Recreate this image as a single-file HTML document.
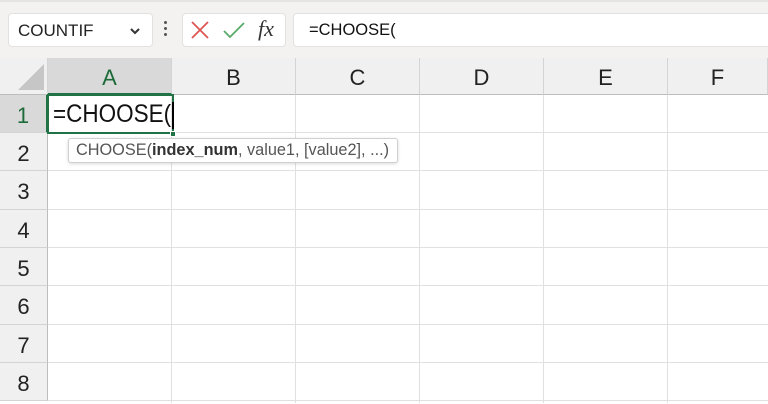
<!DOCTYPE html>
<html><head><style>
*{margin:0;padding:0;box-sizing:border-box}
body{width:768px;height:403px;overflow:hidden;background:#fff;font-family:"Liberation Sans",sans-serif;position:relative}
.tb{position:absolute;left:0;top:0;width:768px;height:58px;background:#f3f2f1;border-top:2px solid #e6e4e2}
.box{position:absolute;top:13px;height:34px;background:#fff;border:1px solid #e3e1df;border-radius:4px}
.a{position:absolute}
.ch{position:absolute;top:58px;height:37px;background:#f0f0f0;border-right:1px solid #d4d4d4;border-bottom:1px solid #bdbdbd;font-size:22px;color:#222;text-align:center;line-height:39px}
.rh{position:absolute;left:0;width:48px;height:38px;background:#f0f0f0;border-bottom:1px solid #d4d4d4;border-right:1px solid #bdbdbd;font-size:22px;color:#222;text-align:center;line-height:41px}
.vl{position:absolute;top:95px;height:308px;width:1px;background:#e0e0e0}
.hl{position:absolute;left:48px;width:720px;height:1px;background:#e0e0e0}
</style></head><body>
<div class="tb"></div>
<div class="box" style="left:8px;width:145px"></div>
<div class="a" style="left:18px;top:21px;font-size:17px;color:#222">COUNTIF</div>
<svg class="a" style="left:129px;top:26px" width="12" height="10"><path d="M2 3 L6 7 L10 3" stroke="#333" stroke-width="2" fill="none"/></svg>
<div class="a" style="left:164px;top:21px;width:3px;height:3px;background:#555;border-radius:2px;box-shadow:0 6px 0 #555,0 12px 0 #555"></div>
<div class="box" style="left:182px;width:104px"></div>
<svg class="a" style="left:189px;top:20px" width="22" height="20"><path d="M3 2 L19 18 M19 2 L3 18" stroke="#e05555" stroke-width="1.8" fill="none"/></svg>
<svg class="a" style="left:222px;top:20px" width="24" height="20"><path d="M2 11 L8 17 L22 3" stroke="#5aaa6a" stroke-width="1.8" fill="none"/></svg>
<div class="a" style="left:258px;top:16px;font-family:'Liberation Serif',serif;font-style:italic;font-size:22px;color:#333">fx</div>
<div class="box" style="left:293px;width:480px;border-right:none"></div>
<div class="a" style="left:309px;top:21px;font-size:16.5px;color:#111">=CHOOSE(</div>

<div class="ch" style="left:0;width:48px;background:#f0f0f0"></div>
<svg class="a" style="left:18px;top:64px" width="26" height="26"><path d="M26 0 L26 26 L0 26 Z" fill="#c6c6c6"/></svg>
<div class="ch" style="left:48px;width:124px;background:#d9d9d9;color:#1e6b3a;border-bottom:2px solid #217346">A</div>
<div class="ch" style="left:172px;width:124px">B</div>
<div class="ch" style="left:296px;width:124px">C</div>
<div class="ch" style="left:420px;width:124px">D</div>
<div class="ch" style="left:544px;width:124px">E</div>
<div class="ch" style="left:668px;width:100px">F</div>

<div class="rh" style="top:95px;background:#d9d9d9;color:#1e6b3a;border-right:2px solid #217346">1</div>
<div class="rh" style="top:133px">2</div>
<div class="rh" style="top:171px;height:39px">3</div>
<div class="rh" style="top:210px">4</div>
<div class="rh" style="top:248px">5</div>
<div class="rh" style="top:286px;height:39px">6</div>
<div class="rh" style="top:325px">7</div>
<div class="rh" style="top:363px">8</div>

<div class="vl" style="left:171px"></div><div class="vl" style="left:295px"></div><div class="vl" style="left:419px"></div><div class="vl" style="left:543px"></div><div class="vl" style="left:667px"></div>
<div class="hl" style="top:132px"></div><div class="hl" style="top:170px"></div><div class="hl" style="top:209px"></div><div class="hl" style="top:247px"></div><div class="hl" style="top:285px"></div><div class="hl" style="top:324px"></div><div class="hl" style="top:362px"></div><div class="hl" style="top:400px"></div>

<div class="a" style="left:47px;top:94px;width:127px;height:40px;border:2px solid #217346"></div>
<div class="a" style="left:170px;top:131px;width:6px;height:6px;background:#217346;border:1px solid #fff"></div>
<div class="a" style="left:53px;top:100px;font-size:25px;color:#111;transform:scaleX(0.9);transform-origin:0 0;white-space:nowrap">=CHOOSE(</div>
<div class="a" style="left:172px;top:102px;width:1.5px;height:27px;background:#000"></div>

<div class="a" style="left:68px;top:138px;width:330px;height:25px;background:#fff;border:1px solid #d0d0d0;border-radius:3px;box-shadow:0 1px 3px rgba(0,0,0,.15);font-size:16.3px;color:#555;line-height:23px;padding-left:7px;white-space:nowrap">CHOOSE(<b style="color:#333">index_num</b>, value1, [value2], ...)</div>
</body></html>
